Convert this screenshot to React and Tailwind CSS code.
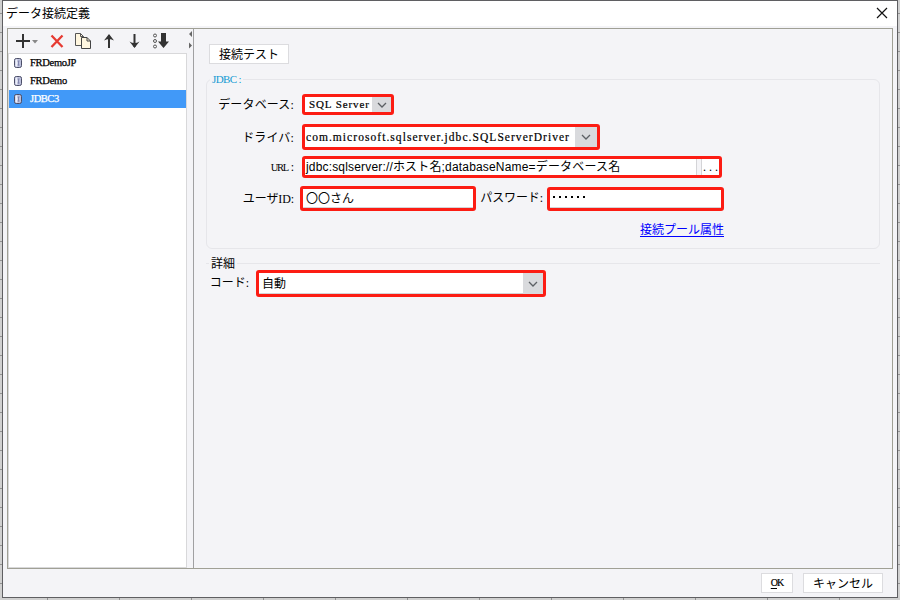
import React from 'react';

const connections = [
  { name: 'FRDemoJP', tracking: 'tracking-[-0.3px]' },
  { name: 'FRDemo', tracking: 'tracking-[-0.25px]' },
  { name: 'JDBC3', tracking: 'tracking-[-0.45px]', selected: true },
];

const gothic = "font-['Noto_Sans_CJK_JP',sans-serif]";
const song = "font-['Liberation_Serif','Noto_Sans_CJK_JP',serif]";

function Chevron() {
  return (
    <svg className="block" width="10" height="6" viewBox="0 0 10 6" fill="none" stroke="#5c6064" strokeWidth="1.3">
      <path d="M1 1l4 4 4-4" />
    </svg>
  );
}

function DatabaseIcon() {
  return (
    <svg className="block" width="8" height="10" viewBox="0 0 8 10">
      <rect x="0.5" y="0.5" width="7" height="9" rx="1.8" fill="#bcc0dc" stroke="#4b4e68" />
      <rect x="1.5" y="1.5" width="2" height="7" fill="#eef0fa" />
      <path d="M4.5 3v4.500M3.500 3h2M3.500 7h2" stroke="#8286ae" />
    </svg>
  );
}

// Toolbar above the connection list
function Toolbar() {
  return (
    <div className="flex h-6 shrink-0 items-center bg-[#f4f4f7]">
      <svg className="block" width="178" height="24" viewBox="-1 0 178 24" fill="none">
        <path d="M14 5v14M7 12h14" stroke="#333" strokeWidth="2" />
        <path d="M23 11h6l-3 3.500z" fill="#888" />
        <path d="M42.500 6.500l11 11.500M53.500 6.500l-11 11.500" stroke="#e63a32" strokeWidth="2.300" />
        <path d="M66.500 4.500h5l3 3v9h-8z" fill="#fff6df" stroke="#555" />
        <path d="M71.500 4.500v3h3" stroke="#555" />
        <path d="M72.500 8.500h5.500l3.500 3.500v7.500h-9z" fill="#fff6df" stroke="#444" />
        <path d="M78 8.500v3.500h3.500" stroke="#444" />
        <path d="M100 6v13" stroke="#333" strokeWidth="2" />
        <path d="M100 5l-5 6.500q2.500-1.500 5-1.500t5 1.500z" fill="#333" />
        <path d="M125.500 5v13" stroke="#333" strokeWidth="2" />
        <path d="M125.500 19l-5-6.500q2.500 1.500 5 1.500t5-1.500z" fill="#333" />
        <circle cx="146" cy="6.500" r="1.500" stroke="#555" />
        <circle cx="146" cy="12" r="1.500" stroke="#555" />
        <circle cx="146" cy="17.500" r="1.500" stroke="#555" />
        <path d="M152 4h5v8.500h3l-5.500 6.500-5.500-6.500h3z" fill="#333" />
      </svg>
    </div>
  );
}

function Sidebar() {
  return (
    <aside className="flex w-[179px] flex-col">
      <Toolbar />
      <ul className="flex-1 border border-[#d8d8da] bg-white">
        {connections.map((item) => (
          <li
            key={item.name}
            className={`flex h-[18px] items-center pl-[5px] ${item.selected ? 'bg-[#4199f8] text-white' : 'text-black'}`}
          >
            <DatabaseIcon />
            <span className={`ml-2 text-[10.5px] leading-none [-webkit-text-stroke:0.25px] ${song} ${item.tracking}`}>
              {item.name}
            </span>
          </li>
        ))}
      </ul>
    </aside>
  );
}

function Label({ children, className }) {
  return (
    <span className={`shrink-0 whitespace-nowrap pt-px text-right text-[12px] leading-4 ${song} ${className}`}>
      {children}
    </span>
  );
}

// Input frame highlighted in red
function Highlight({ children, className }) {
  return (
    <div className={`flex shrink-0 overflow-hidden rounded-[3px] border-[3px] border-[#fc1c13] bg-white ${className}`}>
      {children}
    </div>
  );
}

function SelectArrow({ className }) {
  return (
    <span className={`ml-auto flex shrink-0 items-center justify-center bg-[#d9dadd] ${className}`}>
      <Chevron />
    </span>
  );
}

function JdbcForm() {
  return (
    <fieldset className="ml-[12px] mt-[7px] h-[178px] w-[674px] rounded-[6px] border border-[#e6e6ea]">
      <legend className={`ml-[3px] h-[16px] px-[2px] text-[11px] leading-4 tracking-[-0.6px] text-[#159bd3] ${song}`}>
        JDBC<span className="ml-[2px]">:</span>
      </legend>
      <div className="mt-[7px] flex h-[21px] items-center">
        <Label className="mr-[8px] w-[87px] pt-[3px] tracking-[0.15px]">データベース:</Label>
        <Highlight className="h-[21px] w-[92px]">
          <span className={`pl-[4px] text-[11px] leading-[14px] tracking-[0.9px] [-webkit-text-stroke:0.2px] ${song}`}>
            SQL Server
          </span>
          <SelectArrow className="w-[19px]" />
        </Highlight>
      </div>
      <div className="mt-[9px] flex h-[26px] items-center">
        <Label className="mr-[8px] w-[87px] tracking-[0.15px]">ドライバ:</Label>
        <Highlight className="h-[26px] w-[298px] items-stretch">
          <span className={`pl-[1px] text-[11.5px] leading-[20px] tracking-[1.05px] [-webkit-text-stroke:0.2px] ${song}`}>
            com.microsoft.sqlserver.jdbc.SQLServerDriver
          </span>
          <SelectArrow className="w-[22px]" />
        </Highlight>
      </div>
      <div className="mt-[6px] flex h-[22px] items-center">
        <Label className="mr-[8px] w-[87px] tracking-[-1.4px]">
          <span className="text-[10.5px]">URL</span>
          <span className="ml-[3px] tracking-normal">:</span>
        </Label>
        <Highlight className="h-[22px] w-[420px]">
          <span className="whitespace-nowrap pl-[1px] font-['Liberation_Sans','Noto_Sans_CJK_JP',sans-serif] text-[12px] leading-[17px] tracking-[0.17px]">
            jdbc:sqlserver://ホスト名;databaseName=データベース名
          </span>
          <span className="ml-auto w-[6px] border-x border-[#d4d4d7] bg-[#f4f4f7]" />
          <span className={`w-[17px] pl-[1px] text-[12px] leading-[17px] tracking-[3px] ${song}`}>...</span>
        </Highlight>
      </div>
      <div className="mt-[8px] flex h-[25px] items-center">
        <Label className="mr-[6px] w-[87px] tracking-[-0.1px]">ユーザID:</Label>
        <Highlight className="h-[25px] w-[176px]">
          <span className={`w-full border-b border-[#d4d4d7] pl-[3px] text-[12px] leading-[17px] ${gothic}`}>〇〇さん</span>
        </Highlight>
        <Label className="-mt-[3px] ml-[2px] mr-[4px] w-[65px] tracking-[-0.1px]">パスワード:</Label>
        <Highlight className="mt-px h-[24px] w-[177px]">
          <span className="flex w-full gap-[4px] border-b border-[#d4d4d7] pl-[3px] pt-[6px]">
            {[0, 1, 2, 3, 4, 5].map((dot) => (
              <i key={dot} className="size-[2px] bg-black" />
            ))}
          </span>
        </Highlight>
      </div>
      <div className="mt-[5px] pr-[155px] text-right">
        <a className={`inline-block text-[12px] leading-[18px] text-[#0000ff] underline underline-offset-2 ${gothic}`}>
          接続プール属性
        </a>
      </div>
    </fieldset>
  );
}

function ConnectionPanel() {
  return (
    <main className="flex-1">
      <button
        className={`ml-[15px] mt-[15px] block h-[20px] w-[80px] border border-[#dcdcdf] bg-white text-[12px] leading-[18px] ${gothic}`}
      >
        接続テスト
      </button>
      <JdbcForm />
      <div className="ml-[12px] mt-[5px] flex h-[18px] w-[674px] items-center">
        <span className="h-px w-[3px] bg-[#e6e6ea]" />
        <span className={`px-[2px] text-[12px] leading-[18px] ${gothic}`}>詳細</span>
        <span className="h-px flex-1 bg-[#e6e6ea]" />
      </div>
      <div className="-mt-[2px] ml-[15px] flex h-[27px] items-center">
        <Label className="-mt-[2px] mr-[7px] w-[40px]">コード:</Label>
        <Highlight className="h-[27px] w-[290px]">
          <span className={`flex-1 border-b border-[#d4d4d7] pl-[3px] text-[12px] leading-[20px] ${gothic}`}>自動</span>
          <SelectArrow className="w-[20px]" />
        </Highlight>
      </div>
    </main>
  );
}

function App() {
  return (
    <div className="h-[600px] w-[900px] overflow-hidden bg-[#d0d0d0] bg-[repeating-linear-gradient(90deg,transparent_0_71px,#929292_71px_72px),repeating-linear-gradient(180deg,transparent_0_18px,#929292_18px_19px)] bg-[position:-24px_0,0_-5px] pl-[2px] text-black">
      <div className="flex h-[598px] w-[896px] flex-col border border-[#5f5f62] bg-[#f4f4f7]">
        <header className="flex h-[25px] shrink-0 items-center bg-white pl-[3px] pr-[9px]">
          <h1 className={`-mt-[2px] text-[12px] leading-6 ${gothic}`}>データ接続定義</h1>
          <svg className="-mt-[2px] ml-auto block" width="12" height="12" viewBox="0 0 12 12" stroke="#111" strokeWidth="1.2">
            <path d="M1 1l10 10M11 1L1 11" />
          </svg>
        </header>
        <div className="ml-[4px] mt-[2px] flex h-[541px] w-[886px] shrink-0 border border-[#a0a095]">
          <Sidebar />
          {/* Split pane handle */}
          <div className="w-[7px] border-r border-[#a0a0a2]">
            <svg className="block" width="6" height="22" viewBox="0 0 6 22" fill="#666">
              <path d="M5 2v6L2 5zM2 13.500v6l3-3z" />
            </svg>
          </div>
          <ConnectionPanel />
        </div>
        <footer className="flex justify-end gap-[10px] pr-[14px] pt-[4px]">
          <button
            className={`h-[20px] w-[32px] border border-[#dcdcdf] bg-white text-[10px] leading-[18px] tracking-[-1px] [-webkit-text-stroke:0.2px] ${song}`}
          >
            <u className="underline-offset-2">O</u>K
          </button>
          <button className={`h-[20px] w-[80px] border border-[#dcdcdf] bg-white text-[12px] leading-[18px] ${gothic}`}>
            キャンセル
          </button>
        </footer>
      </div>
    </div>
  );
}

export default App;
